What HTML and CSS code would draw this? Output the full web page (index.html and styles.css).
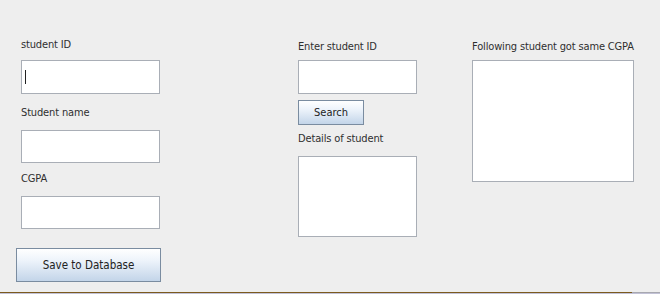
FILE: index.html
```html
<!DOCTYPE html>
<html lang="en">
<head>
  <meta charset="UTF-8" />
  <title>Student Database</title>
  <link rel="stylesheet" href="styles.css">
</head>
<body>

  <div class="window">

    <!-- add student -->
    <section class="col col-add">
      <label class="lbl first" for="sid">student ID</label>
      <div class="field tall">
        <input type="text" id="sid" />
        <span class="caret"></span>
      </div>

      <label class="lbl" for="sname">Student name</label>
      <div class="field"><input type="text" id="sname" /></div>

      <label class="lbl" for="cgpa">CGPA</label>
      <div class="field"><input type="text" id="cgpa" /></div>

      <button class="btn btn-save">Save to Database</button>
    </section>

    <!-- search -->
    <section class="col col-search">
      <label class="lbl first" for="findid">Enter student ID</label>
      <div class="field tall"><input type="text" id="findid" /></div>
      <button class="btn btn-search">Search</button>

      <label class="lbl" for="details">Details of student</label>
      <textarea id="details" class="box box-details"></textarea>
    </section>

    <!-- same cgpa -->
    <section class="col col-same">
      <label class="lbl first" for="same">Following student got same CGPA</label>
      <textarea id="same" class="box box-same"></textarea>
    </section>

  </div>
  <div class="edge"></div>

</body>
</html>
```

FILE: styles.css
```css
* {
  margin: 0;
  padding: 0;
  box-sizing: border-box;
}

body {
  background-color: #eeeeee;
  font-family: "DejaVu Sans", sans-serif;
  font-stretch: condensed;
  font-size: 11px;
  letter-spacing: -0.15px;
  color: #2e2e2e;
  overflow: hidden;
}

.window {
  height: 292px;
  display: flex;
  align-items: flex-start;
  padding-left: 16px;
}

.edge {
  height: 2px;
  background:
    linear-gradient(#7b5a1e, #7b5a1e) 0 0 / 632px 1px no-repeat,
    linear-gradient(#a8a8b0, #a8a8b0) 632px 0 / 28px 1px no-repeat,
    #c2c2d6;
}

.col {
  display: flex;
  flex-direction: column;
}

.col-add {
  width: 145px;
}

.col-search {
  width: 119px;
  margin-left: 137px;
}

.col-same {
  width: 162px;
  margin-left: 55px;
}

.lbl {
  display: block;
  line-height: 14px;
  height: 14px;
  margin-top: 12px;
  margin-bottom: 10px;
  white-space: nowrap;
}

.lbl.first {
  margin-top: 38px;
  margin-bottom: 8px;
}

.col-search .lbl.first,
.col-same .lbl.first {
  margin-top: 40px;
  margin-bottom: 6px;
}

.col-add .lbl {
  margin-left: 5px;
}

.field {
  position: relative;
  height: 33px;
}

.field.tall {
  height: 34px;
}

.col-add .field {
  width: 139px;
  margin-left: 5px;
}

.col-add .field + .lbl + .field + .lbl {
  margin-top: 9px;
}

.field input {
  width: 100%;
  height: 100%;
  border: 1px solid #a9aeb6;
  background: #ffffff;
  outline: none;
  font: inherit;
}

.caret {
  position: absolute;
  left: 4px;
  top: 10px;
  width: 1px;
  height: 14px;
  background: #222222;
}

.btn {
  font: inherit;
  color: #222222;
  border: 1px solid #7a8ca0;
  background: linear-gradient(#ffffff 0%, #eef4fb 35%, #c3d5e9 100%);
  cursor: pointer;
}

.btn-save {
  width: 145px;
  height: 34px;
  margin-top: 19px;
  font-size: 11.5px;
}

.btn-search {
  width: 66px;
  height: 25px;
  margin-top: 6px;
}

.col-search .btn-search + .lbl {
  margin-top: 7px;
  margin-bottom: 10px;
}

.box {
  display: block;
  resize: none;
  border: 1px solid #a9aeb6;
  background: #ffffff;
  outline: none;
  font: inherit;
}

.box-details {
  width: 119px;
  height: 81px;
}

.box-same {
  width: 162px;
  height: 122px;
}
```
